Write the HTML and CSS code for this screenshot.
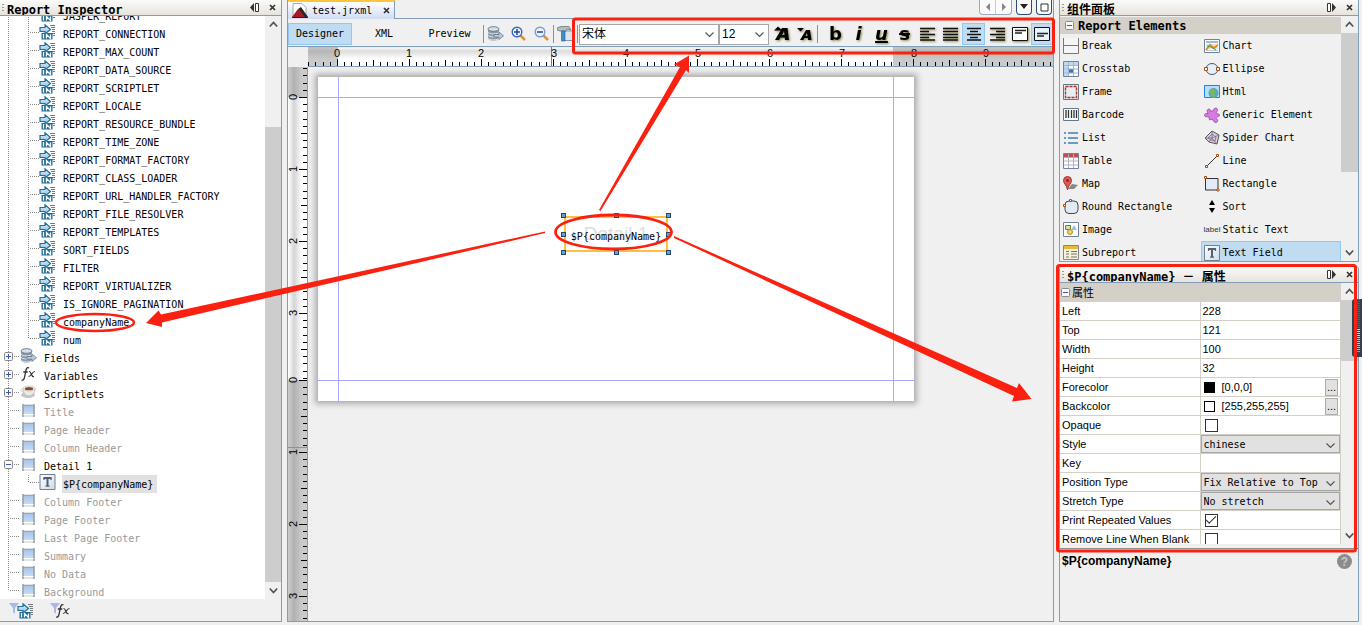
FILE: index.html
```html
<!DOCTYPE html>
<html lang="zh-CN">
<head>
<meta charset="utf-8">
<title>test.jrxml</title>
<link rel="stylesheet" href="styles.css">
</head>
<body>
<svg width="0" height="0" class="defs" aria-hidden="true">
  <defs>
    <linearGradient id="blue" x1="0" y1="0" x2="0" y2="1"><stop offset="0" stop-color="#dceefa"/><stop offset="1" stop-color="#8fc3e6"/></linearGradient>
    <linearGradient id="band" x1="0" y1="0" x2="0" y2="1"><stop offset="0" stop-color="#a8c4ea"/><stop offset="1" stop-color="#c6dcf2"/></linearGradient>
    <linearGradient id="pale" x1="0" y1="0" x2="1" y2="1"><stop offset="0" stop-color="#fff"/><stop offset="1" stop-color="#cfdbe8"/></linearGradient>
    <pattern id="ticks-x" x="29" width="72" height="19" patternUnits="userSpaceOnUse"><path d="M.5 12v7M7.5 15v4M14.5 15v4M22.5 15v4M29.5 15v4M36.5 13v6M43.5 15v4M50.5 15v4M58.5 15v4M65.5 15v4" stroke="#000"/></pattern>
    <pattern id="ticks-y" y="30" width="19" height="72" patternUnits="userSpaceOnUse"><path d="M11 .5h8M15 7.5h4M15 14.5h4M15 22.5h4M15 29.5h4M13 36.5h6M15 43.5h4M15 50.5h4M15 58.5h4M15 65.5h4" stroke="#000"/></pattern>
    <pattern id="ticks-y2" y="25" width="19" height="72" patternUnits="userSpaceOnUse"><path d="M11 .5h8M15 7.5h4M15 14.5h4M15 22.5h4M15 29.5h4M13 36.5h6M15 43.5h4M15 50.5h4M15 58.5h4M15 65.5h4" stroke="#000"/></pattern>
  </defs>
  <symbol id="param" viewBox="0 0 17 16"><path d="M11 1.5h5M12 3.5h4M13 5.5h3M13 7.5h3M12 9.5h4M14 11.5h2" stroke="#777"/><path d="M1 3.500h5V.8L11.500 5.500 6 10V7.500H1z" fill="url(#blue)" stroke="#1f6e9c" stroke-width="1.200"/><path d="M2.500 9h11v6.500h-11z" fill="#1b6a98"/><path d="M4.500 10v4.500M7.500 14.500v-4l4 4v-4" stroke="#fff" stroke-width="1.300" fill="none"/></symbol>
  <symbol id="section" viewBox="0 0 16 16"><path d="M2 2h12v13H2z" fill="#e3e3e1"/><path d="M3 4h10v8H3z" fill="url(#band)"/><path d="M3 3.500h10" stroke="#8aa6dc"/><path d="M2.500 2v13M13.500 2v13" stroke="#6b7789"/><path d="M3 12.500h10" stroke="#fff"/></symbol>
  <symbol id="db" viewBox="0 0 17 16"><path d="M1 3v9c0 3.500 11 3.500 11 0V3z" fill="#8b9bab"/><path d="M1 6c0 2.500 11 2.500 11 0M1 9c0 2.500 11 2.500 11 0M1 12c0 2.500 11 2.500 11 0" fill="none" stroke="#dce5ed"/><ellipse cx="6.500" cy="3" rx="5.500" ry="2.300" fill="#d5e0ea" stroke="#667a8c"/><path d="M7 8.500h5V6l4.500 3.800L12 13.500v-2.300H7z" fill="#b8c9d9" stroke="#5f7284" stroke-width=".7"/></symbol>
  <symbol id="fx" viewBox="0 0 16 16"><path d="M8.500 2C6 .5 5.500 4 4.800 7.500 4 12 3.500 15 1 14M2.800 6h4.500" fill="none" stroke="#333" stroke-width="1.300"/><path d="M8.500 5.500c2.500-.5 2 6 5 5.200M14.500 5.500C12 5 10.500 11 8 10.500" fill="none" stroke="#333" stroke-width="1.200"/></symbol>
  <symbol id="cup" viewBox="0 0 17 16"><ellipse cx="8" cy="11" rx="7" ry="3" fill="#c8c5c2"/><path d="M3 4h12c0 5-2 8-6 8S3 9 3 4" fill="#eee9e6" stroke="#b5b0ad" stroke-width=".8"/><ellipse cx="9" cy="4.500" rx="6" ry="2.500" fill="#fff" stroke="#bbb" stroke-width=".7"/><ellipse cx="9" cy="4.700" rx="4.300" ry="1.600" fill="#8d4b2e"/><path d="M3 5C0 4 0 9 4 8" stroke="#ccc" fill="none"/></symbol>
  <symbol id="text" viewBox="0 0 16 16"><path d="M.5.5h15v15H.5z" fill="url(#pale)" stroke="#6f8195"/><path d="M4.500 6V4h7v2M6 12.200h4" fill="none" stroke="#56606c" stroke-width="1.200"/><path d="M4 4h8M8 4v8" stroke="#56606c" stroke-width="2"/></symbol>
  <symbol id="plus" viewBox="0 0 9 9"><rect x=".5" y=".5" width="8" height="8" rx="1" fill="#f8f8f8" stroke="#8a8a8a"/><path d="M2 4.500h5M4.500 2v5" stroke="#3d5aa8"/></symbol>
  <symbol id="minus" viewBox="0 0 9 9"><rect x=".5" y=".5" width="8" height="8" rx="1" fill="#f8f8f8" stroke="#8a8a8a"/><path d="M2 4.500h5" stroke="#3d5aa8"/></symbol>
  <symbol id="up" viewBox="0 0 9 7"><path d="M.8 5.500l3.700-4 3.700 4" fill="none" stroke="#505050" stroke-width="1.700"/></symbol>
  <symbol id="down" viewBox="0 0 9 7"><path d="M.8 1.500l3.700 4 3.700-4" fill="none" stroke="#505050" stroke-width="1.700"/></symbol>
  <symbol id="chev" viewBox="0 0 9 7"><path d="M.5 1.500l4 4 4-4" fill="none" stroke="#555" stroke-width="1.200"/></symbol>
  <symbol id="close" viewBox="0 0 7 7"><path d="M1 1l5 5M6 1L1 6" stroke="#333" stroke-width="1.700"/></symbol>
  <symbol id="pin-l" viewBox="0 0 9 9"><path d="M4 0v9L0 4.500z" fill="#333"/><path d="M5.500.5h3v8h-3z" fill="#fff" stroke="#333"/></symbol>
  <symbol id="pin-r" viewBox="0 0 9 9"><path d="M5 0v9l4-4.500z" fill="#333"/><path d="M.5.5h3v8h-3z" fill="#fff" stroke="#333"/></symbol>
</svg>

<div class="app">
  <section class="panel inspector">
    <header class="titlebar"><h2>Report Inspector</h2><button aria-label="Minimize"><svg width="9" height="9"><use href="#pin-l"/></svg></button><button aria-label="Close"><svg width="7" height="7"><use href="#close"/></svg></button></header>
    <div class="scroll-area">
      <ul class="tree">
        <li><i class="g v"></i><i class="g v h"></i><svg class="ic"><use href="#param"/></svg><span>JASPER_REPORT</span></li>
        <li><i class="g v"></i><i class="g v h"></i><svg class="ic"><use href="#param"/></svg><span>REPORT_CONNECTION</span></li>
        <li><i class="g v"></i><i class="g v h"></i><svg class="ic"><use href="#param"/></svg><span>REPORT_MAX_COUNT</span></li>
        <li><i class="g v"></i><i class="g v h"></i><svg class="ic"><use href="#param"/></svg><span>REPORT_DATA_SOURCE</span></li>
        <li><i class="g v"></i><i class="g v h"></i><svg class="ic"><use href="#param"/></svg><span>REPORT_SCRIPTLET</span></li>
        <li><i class="g v"></i><i class="g v h"></i><svg class="ic"><use href="#param"/></svg><span>REPORT_LOCALE</span></li>
        <li><i class="g v"></i><i class="g v h"></i><svg class="ic"><use href="#param"/></svg><span>REPORT_RESOURCE_BUNDLE</span></li>
        <li><i class="g v"></i><i class="g v h"></i><svg class="ic"><use href="#param"/></svg><span>REPORT_TIME_ZONE</span></li>
        <li><i class="g v"></i><i class="g v h"></i><svg class="ic"><use href="#param"/></svg><span>REPORT_FORMAT_FACTORY</span></li>
        <li><i class="g v"></i><i class="g v h"></i><svg class="ic"><use href="#param"/></svg><span>REPORT_CLASS_LOADER</span></li>
        <li><i class="g v"></i><i class="g v h"></i><svg class="ic"><use href="#param"/></svg><span>REPORT_URL_HANDLER_FACTORY</span></li>
        <li><i class="g v"></i><i class="g v h"></i><svg class="ic"><use href="#param"/></svg><span>REPORT_FILE_RESOLVER</span></li>
        <li><i class="g v"></i><i class="g v h"></i><svg class="ic"><use href="#param"/></svg><span>REPORT_TEMPLATES</span></li>
        <li><i class="g v"></i><i class="g v h"></i><svg class="ic"><use href="#param"/></svg><span>SORT_FIELDS</span></li>
        <li><i class="g v"></i><i class="g v h"></i><svg class="ic"><use href="#param"/></svg><span>FILTER</span></li>
        <li><i class="g v"></i><i class="g v h"></i><svg class="ic"><use href="#param"/></svg><span>REPORT_VIRTUALIZER</span></li>
        <li><i class="g v"></i><i class="g v h"></i><svg class="ic"><use href="#param"/></svg><span>IS_IGNORE_PAGINATION</span></li>
        <li><i class="g v"></i><i class="g v h"></i><svg class="ic"><use href="#param"/></svg><span>companyName</span></li>
        <li><i class="g v"></i><i class="g end h"></i><svg class="ic"><use href="#param"/></svg><span>num</span></li>
        <li><i class="g v h"><svg class="ex"><use href="#plus"/></svg></i><svg class="ic"><use href="#db"/></svg><span>Fields</span></li>
        <li><i class="g v h"><svg class="ex"><use href="#plus"/></svg></i><svg class="ic"><use href="#fx"/></svg><span>Variables</span></li>
        <li><i class="g v h"><svg class="ex"><use href="#plus"/></svg></i><svg class="ic"><use href="#cup"/></svg><span>Scriptlets</span></li>
        <li class="off"><i class="g v h"></i><svg class="ic"><use href="#section"/></svg><span>Title</span></li>
        <li class="off"><i class="g v h"></i><svg class="ic"><use href="#section"/></svg><span>Page Header</span></li>
        <li class="off"><i class="g v h"></i><svg class="ic"><use href="#section"/></svg><span>Column Header</span></li>
        <li><i class="g v h"><svg class="ex"><use href="#minus"/></svg></i><svg class="ic"><use href="#section"/></svg><span>Detail 1</span></li>
        <li><i class="g v"></i><i class="g end h"></i><svg class="ic"><use href="#text"/></svg><span class="picked">$P{companyName}</span></li>
        <li class="off"><i class="g v h"></i><svg class="ic"><use href="#section"/></svg><span>Column Footer</span></li>
        <li class="off"><i class="g v h"></i><svg class="ic"><use href="#section"/></svg><span>Page Footer</span></li>
        <li class="off"><i class="g v h"></i><svg class="ic"><use href="#section"/></svg><span>Last Page Footer</span></li>
        <li class="off"><i class="g v h"></i><svg class="ic"><use href="#section"/></svg><span>Summary</span></li>
        <li class="off"><i class="g v h"></i><svg class="ic"><use href="#section"/></svg><span>No Data</span></li>
        <li class="off"><i class="g end h"></i><svg class="ic"><use href="#section"/></svg><span>Background</span></li>
      </ul>
      <div class="scrollbar tree-bar"><svg width="9" height="7"><use href="#up"/></svg><div class="track"><div class="thumb"></div></div><svg width="9" height="7"><use href="#down"/></svg></div>
    </div>
    <footer class="filters">
      <button aria-label="Filter parameters"><svg width="26" height="18"><path d="M0 2h10L6 7v6L4 11V7z" fill="#a9b8ea"/><use href="#param" x="8" y="2" width="17" height="16"/></svg></button>
      <button aria-label="Filter variables"><svg width="22" height="18"><path d="M0 2h10L6 7v6L4 11V7z" fill="#a9b8ea"/><use href="#fx" x="5" y="2" width="16" height="16"/></svg></button>
    </footer>
  </section>

  <main class="editor">
    <div class="tabs">
      <div class="tab"><svg width="16" height="16" viewBox="0 0 16 16"><path d="M1 .5h9l4 4v10H1z" fill="#fff" stroke="#aaa"/><path d="M0 14L6 6l8 8z" fill="#a91722"/><path d="M6 6l3-2 7 10h-3z" fill="#282426"/><path d="M0 14.500h16" stroke="#222"/></svg><span>test.jrxml</span><button aria-label="Close tab"><svg width="7" height="7"><use href="#close"/></svg></button></div>
      <div class="tab-space">
        <div class="pair"><button aria-label="Previous"><svg width="6" height="8"><path d="M5 0v8L1 4z" fill="#888"/></svg></button><button aria-label="Next"><svg width="6" height="8"><path d="M1 0v8l4-4z" fill="#888"/></svg></button></div>
        <button class="nav" aria-label="Documents"><svg width="10" height="6"><path d="M1 0h8L5 5z" fill="#222"/></svg></button>
        <button class="nav" aria-label="Maximize"><svg width="9" height="9"><path d="M1 1h7v7H1z" fill="#fff" stroke="#333"/></svg></button>
      </div>
    </div>
    <div class="toolbar">
      <button class="mode on">Designer</button><button class="mode">XML</button><button class="mode wide">Preview</button>
      <i class="sep"></i>
      <button class="tool" aria-label="Query"><svg width="17" height="16"><use href="#db"/></svg></button>
      <button class="tool" aria-label="Zoom in"><svg width="16" height="16" viewBox="0 0 16 16"><path d="M9.500 9.500l4.500 4.500" stroke="#d9953a" stroke-width="2.500"/><circle cx="6" cy="6" r="4.800" fill="#eaf2fc" stroke="#3569bf" stroke-width="1.400"/><path d="M3 6h6M6 3v6" stroke="#2448a5" stroke-width="1.500"/></svg></button>
      <button class="tool" aria-label="Zoom out"><svg width="16" height="16" viewBox="0 0 16 16"><path d="M9.500 9.500l4.500 4.500" stroke="#d9953a" stroke-width="2.500"/><circle cx="6" cy="6" r="4.800" fill="#eaf2fc" stroke="#7a9cd6" stroke-width="1.400"/><path d="M3 6h6" stroke="#2448a5" stroke-width="1.500"/></svg></button>
      <i class="sep"></i>
      <button class="tool" aria-label="Compile"><svg width="17" height="16" viewBox="0 0 17 16"><path d="M7 5h9.500v9.500H7z" fill="#dce6f1" stroke="#8295aa"/><path d="M0 2l4-1.500h8l2 3.500-4-1-1 2H3L0 4z" fill="#b4bec5" stroke="#5c6871" stroke-width=".7"/><path d="M4.500 5h3.500v10H4.500z" fill="#438fc4" stroke="#286b9b" stroke-width=".7"/></svg></button>
      <i class="sep"></i>
      <span class="combo font"><select aria-label="Font"><option>宋体</option></select><svg width="9" height="7"><use href="#chev"/></svg></span>
      <span class="combo size"><select aria-label="Font size"><option>12</option></select><svg width="9" height="7"><use href="#chev"/></svg></span>
      <button class="glyph" aria-label="Increase font"><svg width="16" height="16" viewBox="0 0 16 16"><path d="M0 4.500L4 .5l4 4z"/><path d="M1 14L8 2h5.500L15 14h-4l-.3-2.500H6.500L5 14zM8 9h2.500L10 5z" fill-rule="evenodd"/></svg></button>
      <button class="glyph" aria-label="Decrease font"><svg width="16" height="16" viewBox="0 0 16 16"><path d="M0 2h7L3.500 5.500z"/><path d="M3 14L9 4h4l1.500 10H11l-.3-2H7.500L6.300 14zM8.500 10h2L10 6.500z" fill-rule="evenodd"/></svg></button>
      <i class="sep gap"></i>
      <button class="glyph letter">b</button><button class="glyph letter it">i</button><button class="glyph letter it un">u</button><button class="glyph letter st">s</button>
      <button class="glyph" aria-label="Align left"><svg width="16" height="14"><path d="M0 1.500h15M0 4.500h9M0 7.500h15M0 10.500h9M0 13h15" stroke="#111" stroke-width="1.600"/></svg></button>
      <button class="glyph" aria-label="Justify"><svg width="16" height="14"><path d="M0 1.500h15M0 4.500h15M0 7.500h15M0 10.500h15M0 13h15" stroke="#111" stroke-width="1.600"/></svg></button>
      <button class="glyph on" aria-label="Align center"><svg width="16" height="14"><path d="M1 1.500h14M4 4.500h8M1 7.500h14M4 10.500h8M1 13h14" stroke="#111" stroke-width="1.600"/></svg></button>
      <button class="glyph" aria-label="Align right"><svg width="16" height="14"><path d="M1 1.500h15M7 4.500h9M1 7.500h15M7 10.500h9M1 13h15" stroke="#111" stroke-width="1.600"/></svg></button>
      <button class="glyph" aria-label="Align top"><svg width="16" height="14"><path d="M.5.500h15v13H.5z" fill="#fff" stroke="#111"/><path d="M3 3.500h11M3 6h7" stroke="#222" stroke-width="1.600"/></svg></button>
      <button class="glyph on last" aria-label="Align middle"><svg width="16" height="14"><path d="M.5.500h15v13H.5z" fill="#e8f3fc" stroke="#111"/><path d="M3 6.500h11M3 9h7" stroke="#222" stroke-width="1.600"/></svg></button>
    </div>
    <div class="top-ruler"><svg width="100%" height="19">
      <rect width="30" height="19" class="shade"/><rect x="585" width="100%" height="19" class="shade"/>
      <rect width="100%" height="19" fill="url(#ticks-x)"/><path d="M243.500 0v19" stroke="#3f8f93"/>
      <g class="nums"><text x="29" y="10">0</text><text x="101" y="10">1</text><text x="173" y="10">2</text><text x="246" y="10">3</text><text x="318" y="10">4</text><text x="390" y="10">5</text><text x="462" y="10">6</text><text x="534" y="10">7</text><text x="606" y="10">8</text><text x="678" y="10">9</text></g>
    </svg></div>
    <div class="work">
      <div class="side-ruler"><svg width="19" height="100%">
        <rect width="19" height="30" class="shade"/><rect y="313" width="19" height="100%" class="shade"/>
        <rect width="19" height="313" fill="url(#ticks-y)"/><rect y="313" width="19" height="100%" fill="url(#ticks-y2)"/><path d="M0 380.500h19" stroke="#3fb5b5"/>
        <g class="nums"><text transform="translate(9 30) rotate(-90)">0</text><text transform="translate(9 102) rotate(-90)">1</text><text transform="translate(9 174) rotate(-90)">2</text><text transform="translate(9 246) rotate(-90)">3</text><text transform="translate(9 313) rotate(-90)">0</text><text transform="translate(9 385) rotate(-90)">1</text><text transform="translate(9 457) rotate(-90)">2</text><text transform="translate(9 529) rotate(-90)">3</text></g>
      </svg></div>
      <div class="canvas">
        <div class="page">
          <div class="field"><span class="ghost">Detail 1</span><span class="expr">$P{companyName}</span>
            <i class="k tl"></i><i class="k tc"></i><i class="k tr"></i><i class="k ml"></i><i class="k mr"></i><i class="k bl"></i><i class="k bc"></i><i class="k br"></i>
          </div>
        </div>
      </div>
    </div>
  </main>

  <aside class="right">
    <section class="panel palette">
      <header class="titlebar"><h2>组件面板</h2><button aria-label="Minimize"><svg width="9" height="9"><use href="#pin-r"/></svg></button><button aria-label="Close"><svg width="7" height="7"><use href="#close"/></svg></button></header>
      <div class="scroll-area grey">
        <div class="body">
          <h3><svg width="9" height="9"><use href="#minus"/></svg>Report Elements</h3>
          <ul class="items">
            <li><svg viewBox="0 0 16 16"><path d="M.5 0v15.500h15V0" fill="#f5f5f5" stroke="#777"/><path d="M1 7.500h14" stroke="#4a80c0"/></svg>Break</li>
            <li><svg viewBox="0 0 16 16"><path d="M.5 1.500h15v13H.5z" fill="#fff" stroke="#71839a"/><path d="M2 4h12" stroke="#9eb9da" stroke-width="2"/><path d="M2 7h12M2 10h12M2 12.500h12" stroke="#bcd"/><path d="M2 12l4-5 4 3 4-3" stroke="#e68916" stroke-width="2" fill="none"/><path d="M3 8l4 1 5 3" stroke="#4a9b45" fill="none"/></svg>Chart</li>
            <li><svg viewBox="0 0 16 16"><path d="M.5.500h15v15H.5z" fill="#fff" stroke="#71839a"/><path d="M1 1h14v3H1zM1 1h4v14H1z" fill="#c2d7ef"/><path d="M6 8h4v4H6z" fill="#3f71bd"/><path d="M1 4.500h14M1 8h14M1 12h14M5.500 1v14M10.500 1v14" stroke="#9db5d2"/></svg>Crosstab</li>
            <li><svg viewBox="0 0 16 16"><ellipse cx="8" cy="8" rx="6" ry="5.500" fill="#e8eef5" stroke="#4e5964"/><path d="M.5 6.500h3v3h-3zM12.500 6.500h3v3h-3z" fill="#fff" stroke="#b34811"/></svg>Ellipse</li>
            <li><svg viewBox="0 0 16 16"><path d="M.5.500h15v15H.5z" fill="#e5edf5" stroke="#61778e"/><path d="M2.500 2.500h11v11h-11z" fill="none" stroke="#b8321f" stroke-width="1.400" stroke-dasharray="3 1"/></svg>Frame</li>
            <li><svg viewBox="0 0 16 16"><path d="M.5 1.500h15v12H.5z" fill="#b8dcfb" stroke="#1d83dc"/><circle cx="9.500" cy="9" r="5" fill="#5aa8ba"/><path d="M7 5l5 1-2 4 2 2-4 1-1-3-2-2z" fill="#74bd57"/></svg>Html</li>
            <li><svg viewBox="0 0 16 16"><path d="M.5 1.500h15v12H.5z" fill="#fff" stroke="#62788d"/><path d="M3 3v8M5.500 3v8M8.500 3v8M11 3v8M13.500 3v8" stroke="#333" stroke-width="1.300"/></svg>Barcode</li>
            <li><svg viewBox="0 0 16 16"><path d="M3 3.500c1-2 3.500-2 3.500.5L9 4c0-3 4-4 4.500-1.500.3 1.500-1.500 2.500-1.500 4 1 .8 3-.5 3.500 1.500s-3 1.500-3.500 2.500c0 1.500 2.500 2 1.500 4s-4 1-4.500-1.500c-1-1-2.500-.5-3.500 0L5 10C3.500 9.500 1 10.500.5 8.500S3 6.500 4 6.500z" fill="#d77be0" stroke="#9b45a8" stroke-width=".8"/></svg>Generic Element</li>
            <li><svg viewBox="0 0 16 16"><path d="M1 3h2M1 8h2M1 13h2M5 3h10M5 8h10M5 13h10" stroke="#3f7fb5" stroke-width="1.700"/></svg>List</li>
            <li><svg viewBox="0 0 16 16"><path d="M8 1l7 4-2 9-8-2-4-4z" fill="#d9cede" stroke="#555"/><path d="M8 1v7l7-3M8 8l5 6M8 8l-3 4M8 8H1M8 4l4 3-1 4-4-1-3-2z" fill="none" stroke="#79677e" stroke-width=".8"/></svg>Spider Chart</li>
            <li><svg viewBox="0 0 16 16"><path d="M.5.500h15v15H.5z" fill="#fff" stroke="#71839a"/><path d="M1 1h14v3H1z" fill="#bf4d53"/><path d="M1 4.500h14M1 8h14M1 12h14M5.500 1v14M10.500 1v14" stroke="#aab4c0"/></svg>Table</li>
            <li><svg viewBox="0 0 16 16"><path d="M3 13L13 3" stroke="#333"/><path d="M1.500 12.500h2v2h-2zM12.500 1.500h2v2h-2z" fill="#fff" stroke="#b34811"/></svg>Line</li>
            <li><svg viewBox="0 0 16 16"><path d="M5 13l4-5 6 1-4 4z" fill="#888"/><path d="M4.500 14C4 9 .5 8 .5 4.500a4 4 0 018 0C8.500 8 5 9 4.500 14" fill="#df5b51" stroke="#a13831"/><circle cx="4.500" cy="4.500" r="1.300" fill="#7b1b18"/></svg>Map</li>
            <li><svg viewBox="0 0 16 16"><path d="M1.500 2.500h12.500v11.500H1.500z" fill="#e2ebf5" stroke="#333"/><path d="M.5.500h2v2h-2zM13 13h2v2h-2z" fill="#fff" stroke="#b34811"/></svg>Rectangle</li>
            <li><svg viewBox="0 0 16 16"><rect x="2" y="2" width="13" height="12.500" rx="4" fill="#e2ebf5" stroke="#444"/><path d="M6.500.500h2v2h-2zM.5 5.500h2v2h-2z" fill="#fff" stroke="#b34811"/></svg>Round Rectangle</li>
            <li><svg viewBox="0 0 16 16"><path d="M8 1l3 5H5zM8 14L5 9h6z" fill="#000"/></svg>Sort</li>
            <li><svg viewBox="0 0 16 16"><path d="M.5.500h15v14H.5z" fill="#fff" stroke="#71839a"/><path d="M2.500 3.500h5v4h-5z" fill="#cbe3a6" stroke="#608a39"/><path d="M8 8l3-5 3 5z" fill="#9dbedf"/><circle cx="7" cy="10" r="2.500" fill="#f3d36d" stroke="#b38c25"/></svg>Image</li>
            <li><span class="label-ic">label</span>Static Text</li>
            <li><svg viewBox="0 0 16 16"><path d="M.5.500h15v14H.5z" fill="#f7f2df" stroke="#7d8793"/><path d="M1 1h14v3H1z" fill="#e7b939"/><path d="M3 6.500h3M3 9h3M3 12h3M8 6.500h6M8 9h6M8 12h6" stroke="#79715f"/></svg>Subreport</li>
            <li class="on"><svg viewBox="0 0 16 16"><use href="#text"/></svg>Text Field</li>
          </ul>
        </div>
        <div class="scrollbar palette-bar"><svg width="9" height="7"><use href="#up"/></svg><div class="track"><div class="thumb"></div></div><svg width="9" height="7"><use href="#down"/></svg></div>
      </div>
    </section>
    <section class="panel props">
      <header class="titlebar"><h2>$P{companyName} － 属性</h2><button aria-label="Minimize"><svg width="9" height="9"><use href="#pin-r"/></svg></button><button aria-label="Close"><svg width="7" height="7"><use href="#close"/></svg></button></header>
      <div class="scroll-area">
        <div class="body">
          <h3><svg width="9" height="9"><use href="#minus"/></svg>属性</h3>
          <table>
            <tr><th>Left</th><td>228</td></tr>
            <tr><th>Top</th><td>121</td></tr>
            <tr><th>Width</th><td>100</td></tr>
            <tr><th>Height</th><td>32</td></tr>
            <tr><th>Forecolor</th><td><div class="colour"><i class="sw black"></i><span>[0,0,0]</span><button>...</button></div></td></tr>
            <tr><th>Backcolor</th><td><div class="colour"><i class="sw"></i><span>[255,255,255]</span><button>...</button></div></td></tr>
            <tr><th><label for="opaque">Opaque</label></th><td><input type="checkbox" id="opaque"></td></tr>
            <tr><th><label for="style">Style</label></th><td class="pick"><span class="combo"><select id="style"><option>chinese</option></select><svg width="9" height="7"><use href="#chev"/></svg></span></td></tr>
            <tr><th>Key</th><td></td></tr>
            <tr><th><label for="pos">Position Type</label></th><td class="pick"><span class="combo"><select id="pos"><option>Fix Relative to Top</option></select><svg width="9" height="7"><use href="#chev"/></svg></span></td></tr>
            <tr><th><label for="stretch">Stretch Type</label></th><td class="pick"><span class="combo"><select id="stretch"><option>No stretch</option></select><svg width="9" height="7"><use href="#chev"/></svg></span></td></tr>
            <tr><th><label for="repeat">Print Repeated Values</label></th><td><input type="checkbox" id="repeat" checked></td></tr>
            <tr><th><label for="blank">Remove Line When Blank</label></th><td><input type="checkbox" id="blank"></td></tr>
          </table>
        </div>
        <div class="scrollbar props-bar"><svg width="9" height="7"><use href="#up"/></svg><div class="track"><div class="thumb"></div></div><svg width="9" height="7"><use href="#down"/></svg></div>
      </div>
      <div class="about"><strong>$P{companyName}</strong><button aria-label="Help">?</button></div>
    </section>
  </aside>
</div>

<div class="meter"></div>
<svg class="marks" width="1362" height="625" aria-hidden="true">
  <g fill="none" stroke="#fb2111" stroke-width="3">
    <rect x="573.500" y="19" width="480" height="34" rx="2"/>
    <rect x="1057.500" y="265.500" width="298" height="285.500" rx="2"/>
    <ellipse cx="95" cy="322.500" rx="39" ry="8.500" stroke-width="2.500"/>
    <ellipse cx="613.500" cy="232" rx="58" ry="17" stroke-width="2.800"/>
  </g>
  <g fill="#fb2111">
    <path d="M545 231.500L161 314.500 158.500 310.500 146 323 162 327 162 322.500 545 233z"/>
    <path d="M599 210L680 67 674 64.500 689 55.500 689 73 686 70 600.500 211z"/>
    <path d="M674 236L1017 388 1019 383 1031.500 399 1012 401.500 1014 396 674 238z"/>
  </g>
</svg>
</body>
</html>
```
FILE: styles.css
```css
:root {
  --mono: "DejaVu Sans Mono", "Noto Sans CJK SC", monospace;
  --sans: "Liberation Sans", "Noto Sans CJK SC", sans-serif;
  --line: #829db7;
}
* { box-sizing: border-box; }
body { margin: 0; background: #f0f0f0; font: 10px/18px var(--mono); color: #000; overflow: hidden; }
.defs { position: absolute; }
svg { display: block; flex: none; }
h2, h3, ul { margin: 0; padding: 0; list-style: none; }
button { margin: 0; padding: 0; border: 0; background: none; font: inherit; color: inherit; display: flex; align-items: center; justify-content: center; flex: none; }
select { appearance: none; margin: 0; padding: 0; border: 0; background: none; font: inherit; color: inherit; }

.app { display: grid; grid-template: minmax(0, 1fr) / 282px minmax(0, 1fr) 300px; gap: 5px; height: 100vh; padding: 0 3px 3px 0; }
.panel { display: flex; flex-direction: column; min-height: 0; border: 1px solid var(--line); border-top: 0; overflow: hidden; }
.inspector { border-left: 0; }
.titlebar { display: flex; align-items: center; gap: 10px; height: 16px; padding: 0 5px 0 2px; flex: none; border-bottom: 1px solid var(--line); background: linear-gradient(#fbfbf9, #e6e3dc); overflow: hidden; }
.titlebar::before { content: ""; width: 2px; height: 8px; margin-right: -7px; background: repeating-linear-gradient(#999 0 1px, transparent 1px 3px); }
.titlebar h2 { flex: 1; font-size: 12px; line-height: 15px; padding-top: 5px; white-space: nowrap; }

.scroll-area { display: flex; flex: 1; min-height: 0; background: #fff; overflow: hidden; }
.grey { background: #f0f0f0; }
.body { flex: 1; min-width: 0; }
.scrollbar { display: flex; flex-direction: column; align-items: center; justify-content: space-between; width: 17px; padding: 5px 0; gap: 5px; flex: none; background: #f0f0f0; }
.track { display: flex; flex-direction: column; flex: 1; width: 100%; }
.thumb { background: #cdcdcd; }
.tree-bar { width: 16px; }
.tree-bar .thumb { margin-top: 94px; flex: 1; }
.palette-bar .thumb { height: 66%; }
.props-bar .thumb { height: 27%; }

.tree { flex: 1; margin-top: -9px; }
.tree li { display: flex; height: 18px; }
.tree span { padding: 0 4px 0 1px; margin-left: 6px; white-space: nowrap; line-height: 20px; }
.tree .picked { background: #e1e1e1; }
.off { color: #999; }
.ic { width: 17px; height: 16px; margin-top: -1px; }
.g { position: relative; width: 20px; height: 18px; flex: none; }
.g + .g { width: 19px; }
.v::before, .end::before { content: ""; position: absolute; left: 8px; top: 0; width: 1px; height: 18px; background: repeating-linear-gradient(#888 0 1px, transparent 1px 2px); }
.end::before { height: 8px; }
.h::after { content: ""; position: absolute; left: 9px; top: 7px; width: 10px; height: 1px; background: repeating-linear-gradient(90deg, transparent 0 1px, #888 1px 2px); }
.ex { position: absolute; z-index: 1; left: 4px; top: 3px; width: 9px; height: 9px; }
.filters { display: flex; gap: 15px; height: 22px; padding-left: 9px; flex: none; background: #f0f0f0; }

.editor { display: flex; flex-direction: column; min-width: 0; min-height: 0; border: 1px solid var(--line); border-top: 0; }
.tabs { display: flex; height: 19px; flex: none; }
.tab { display: flex; align-items: center; gap: 4px; width: 107px; padding: 0 4px; border-top: 2px solid #ffc63b; border-right: 1px solid var(--line); background: linear-gradient(#fff, #cfdcf3); }
.tab span { flex: 1; line-height: 19px; }
.tab-space { display: flex; flex: 1; justify-content: flex-end; align-items: flex-start; gap: 4px; padding-right: 1px; border-bottom: 1px solid var(--line); }
.pair { display: flex; width: 33px; height: 15px; border: 1px solid #98a9bd; border-top: 0; border-radius: 0 0 4px 4px; background: #fbfbfb; }
.pair button { flex: 1; }
.pair button + button { border-left: 1px solid #c5ccd5; }
.nav { width: 16px; height: 15px; border: 1px solid #2a4a77; border-top: 0; border-radius: 0 0 4px 4px; background: #fbfbfb; }

.toolbar { display: flex; align-items: center; height: 28px; padding-top: 3px; flex: none; border-bottom: 1px solid var(--line); overflow: hidden; }
.mode { width: 64px; height: 22px; border: 1px solid transparent; }
.wide { width: 67px; }
.on { border: 1px solid #92c8f4; background: #c0dcf3; }
.sep { width: 1px; height: 18px; flex: none; background: #909090; }
.gap { margin: 0 6px 0 1px; }
.tool { width: 23px; height: 20px; }
.combo { display: grid; grid-template-columns: minmax(0, 1fr) 18px; align-items: center; border: 1px solid #a6a6a6; background: #fff; }
.combo select { grid-area: 1 / 1 / 2 / 3; width: 100%; height: 100%; padding-left: 2px; }
.combo svg { grid-area: 1 / 2; justify-self: center; pointer-events: none; }
.font, .size { flex: none; height: 21px; font: 12px/18px var(--sans); }
.font { width: 140px; margin-left: 1px; }
.size { width: 50px; margin-right: 1px; }
.glyph { width: 23px; height: 22px; filter: drop-shadow(1px 1px 1px #88884e); }
.glyph.on { filter: none; }
.last { width: 22px; }
.letter { font: bold 18px/20px "DejaVu Sans", sans-serif; }
.it { font-style: italic; }
.un { text-decoration: underline 2px; text-underline-offset: 1px; }
.st { text-decoration: line-through 2px; }

.top-ruler { height: 20px; margin-left: 20px; flex: none; border-bottom: 1px solid var(--line); background: linear-gradient(#e4e4e4, #f6f6f6 1px, #dcdcdc 4px, #fff 12px); }
.shade { fill: #808080; fill-opacity: .42; }
.nums { font: 11px var(--sans); text-anchor: middle; }
.work { display: flex; flex: 1; min-height: 0; }
.side-ruler { width: 20px; flex: none; overflow: hidden; border-right: 1px solid var(--line); background: linear-gradient(90deg, #fff, #f4f4f4 2px, #d4d4d4 6px, #fff 14px); }
.canvas { flex: 1; min-width: 0; padding: 10px; overflow: hidden; }
.page { position: relative; width: 596px; height: 324px; box-shadow: 0 0 6px 3px #aaa; background: linear-gradient(#a9a9f8, #a9a9f8) 20px 0 / 1px 100% no-repeat, linear-gradient(#a9a9f8, #a9a9f8) 575px 0 / 1px 100% no-repeat, linear-gradient(#a9a9f8, #a9a9f8) 0 20px / 100% 1px no-repeat, linear-gradient(#a9a9f8, #a9a9f8) 0 303px / 100% 1px no-repeat, #fff; }
.field { position: absolute; left: 246px; top: 139px; width: 104px; height: 36px; border: 2px solid #ffc040; display: grid; place-items: center; }
.ghost, .expr { grid-area: 1 / 1; white-space: nowrap; }
.ghost { color: #ddd; font: 19px/28px var(--sans); }
.expr { padding-top: 6px; }
.k { position: absolute; width: 5px; height: 5px; border: 1px solid #244a6b; background: #6c9fc8; }
.tl, .tc, .tr { top: -5px; }
.ml, .mr { top: 14px; }
.bl, .bc, .br { bottom: -5px; }
.tl, .ml, .bl { left: -5px; }
.tc, .bc { left: 48px; }
.tr, .mr, .br { right: -5px; }

.right { display: flex; flex-direction: column; gap: 4px; min-width: 0; min-height: 0; }
.palette { height: 262px; flex: none; }
h3 { display: flex; align-items: center; gap: 4px; background: #d4d0c8; }
.palette h3 { height: 17px; margin-top: 1px; padding-left: 5px; font-size: 12px; }
.items { display: grid; grid-template-columns: 1fr 1fr; }
.items li { display: flex; align-items: center; gap: 3px; height: 23px; padding-left: 2px; border: 1px solid transparent; white-space: nowrap; }
.items li.on { border-color: #92c8f4; }
.items svg { width: 16px; height: 16px; }
.label-ic { width: 16px; font: 8px/16px var(--sans); color: #333; }

.props { flex: 1; border-top: 1px solid var(--line); border-radius: 3px 3px 0 0; }
.props h3 { height: 19px; padding-left: 1px; gap: 2px; font: 11px/18px var(--sans); }
table { width: 100%; border-collapse: separate; border-spacing: 0; table-layout: fixed; font: 11px/18px var(--sans); }
th, td { height: 19px; padding: 0 2px; border-bottom: 1px solid #d4d0c8; border-right: 1px solid #d4d0c8; text-align: left; font-weight: normal; white-space: nowrap; }
td.pick { padding: 0; font-family: var(--mono); font-size: 10px; }
.pick .combo { height: 18px; background: #e1e1e1; }
.colour { display: flex; align-items: center; height: 18px; gap: 7px; }
.colour span { flex: 1; }
.colour button { width: 13px; height: 17px; border: 1px solid #adadad; background: #e1e1e1; }
.sw { width: 11px; height: 11px; margin-left: 1px; border: 1px solid #000; background: #fff; }
.black { background: #000; }
input[type="checkbox"] { appearance: none; display: grid; place-items: center; width: 13px; height: 13px; margin: 0 0 0 2px; border: 1px solid #333; background: #fff; }
input[type="checkbox"]:checked::before { content: ""; width: 9px; height: 4px; border: solid #333; border-width: 0 0 1px 1px; rotate: -45deg; margin-bottom: 3px; }
.about { display: flex; justify-content: space-between; height: 77px; flex: none; padding: 4px 6px 0 2px; border-top: 4px solid #f0f0f0; box-shadow: inset 0 1px #909090; font: 12px/18px var(--sans); }
.about button { width: 15px; height: 15px; margin-top: 2px; border-radius: 8px; background: #8c8c8c; color: #c8c8c8; font-weight: bold; }

.meter { position: absolute; left: 1352px; top: 299px; width: 10px; height: 58px; border-radius: 3px 0 0 3px; background: linear-gradient(90deg, #38404e 5px, transparent 5px 8px, #38404e 8px), repeating-linear-gradient(transparent 0 1px, #38404e 1px 2px), linear-gradient(#596070 50%, #e8e850 52%, #50e8d0 90%, #38404e 92%); }
.marks { position: absolute; left: 0; top: 0; pointer-events: none; }
```
